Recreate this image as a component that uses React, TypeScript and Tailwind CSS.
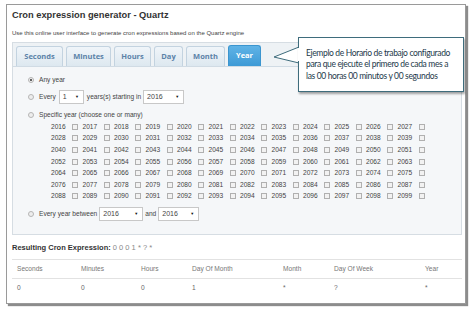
import React from "react";

const years: number[] = Array.from({ length: 84 }, (_, i) => 2016 + i);
const rows: number[][] = Array.from({ length: 7 }, (_, r) => years.slice(r * 12, r * 12 + 12));

function Radio({ checked }: { checked?: boolean }) {
  return (
    <span className="w-[6px] h-[6px] rounded-full border border-[#b5b5b5] bg-[#eeeeee] flex items-center justify-center shrink-0">
      {checked && <span className="w-[2px] h-[2px] rounded-full bg-[#333]" />}
    </span>
  );
}

function Select({ value, w }: { value: string; w: string }) {
  return (
    <span className={`${w} h-[14px] border border-[#c8c8c8] bg-white flex items-center justify-between pl-[3px] pr-[4px] text-[7px] text-[#444]`}>
      <span>{value}</span>
      <span className="text-[4px] text-[#111]">▼</span>
    </span>
  );
}

const tabs = [
  { name: "Seconds", w: "w-[47px]" },
  { name: "Minutes", w: "w-[45px]" },
  { name: "Hours", w: "w-[37px]" },
  { name: "Day", w: "w-[29px]" },
  { name: "Month", w: "w-[39px]" },
];

export default function App() {
  return (
    <div className="relative w-[474px] h-[310px] bg-white overflow-hidden" style={{ fontFamily: '"Liberation Sans", Arial, sans-serif' }}>
      <div className="ml-[6px] mt-[4px] w-[460px] h-[300px] border border-[#9a9a9a] bg-white shadow-[2px_2px_1px_rgba(0,0,0,0.45)] pl-[5px] pt-[4px]">
        <div className="h-[12px] leading-[12px] text-[9.3px] font-bold text-[#333]">Cron expression generator - Quartz</div>
        <div className="mt-[8px] h-[8px] leading-[8px] text-[6px] text-[#444]">
          Use this online user interface to generate cron expressions based on the Quartz engine
        </div>
        <div className="mt-[5px] w-[450px] border border-[#d6dde3] bg-[#f5f7f9]">
          <div className="h-[24px] bg-[#eef2f5] flex items-end gap-[3px] pl-[3px] border-b border-[#d0dbe4]" style={{ fontFamily: '"Open Sans", sans-serif' }}>
            {tabs.map((t) => (
              <div
                key={t.name}
                className={`${t.w} h-[20px] rounded-t-[3px] border border-b-0 border-[#c3d3e0] bg-gradient-to-b from-[#f0f5f9] to-[#dde8f0] flex items-center justify-center text-[7.5px] font-bold text-[#5b82a8]`}
              >
                {t.name}
              </div>
            ))}
            <div className="w-[33px] h-[21px] rounded-t-[3px] border border-b-0 border-[#3b95cf] bg-gradient-to-b from-[#5fb3e6] to-[#3d9ad6] flex items-center justify-center text-[7.5px] font-bold text-white">
              Year
            </div>
          </div>
          <div className="pt-[8px] pb-[13px] pl-[15px] text-[6.6px] text-[#444]">
            <div className="h-[10px] flex items-center gap-[5px]">
              <Radio checked />
              <span>Any year</span>
            </div>
            <div className="mt-[5px] h-[14px] flex items-center">
              <Radio />
              <span className="ml-[5px]">Every</span>
              <span className="ml-[3px]"><Select value="1" w="w-[25px]" /></span>
              <span className="ml-[3px]">years(s) starting in</span>
              <span className="ml-[2px]"><Select value="2016" w="w-[41px]" /></span>
            </div>
            <div className="mt-[6px] h-[10px] flex items-center gap-[5px]">
              <Radio />
              <span>Specific year (choose one or many)</span>
            </div>
            <div className="mt-[1px] ml-[23px]">
              {rows.map((row, ri) => (
                <div key={ri} className="h-[11.6px] flex items-center">
                  {row.map((y) => (
                    <div key={y} className="w-[31.5px] flex items-center shrink-0">
                      <span className="w-[14px]">{y}</span>
                      <span className="ml-[7px] w-[6px] h-[6px] border border-[#b0b0b0] bg-[#f2f2f2]" />
                    </div>
                  ))}
                </div>
              ))}
            </div>
            <div className="mt-[5px] h-[14px] flex items-center">
              <Radio />
              <span className="ml-[5px]">Every year between</span>
              <span className="ml-[2px]"><Select value="2016" w="w-[44px]" /></span>
              <span className="ml-[2px]">and</span>
              <span className="ml-[2px]"><Select value="2016" w="w-[41px]" /></span>
            </div>
          </div>
        </div>
        <div className="mt-[8px] h-[10px] leading-[10px] text-[7.5px]">
          <span className="font-bold text-[#333]">Resulting Cron Expression: </span>
          <span className="text-[#888]">0 0 0 1 * ? *</span>
        </div>
        <div className="mt-[6px] w-[450px] text-[6.6px]">
          <div className="h-[20px] border-t border-b border-[#e2e2e2] flex items-center text-[#777]">
            <span className="w-[69px] pl-[5px]">Seconds</span>
            <span className="w-[60px]">Minutes</span>
            <span className="w-[51px]">Hours</span>
            <span className="w-[91px]">Day Of Month</span>
            <span className="w-[51px]">Month</span>
            <span className="w-[91px]">Day Of Week</span>
            <span>Year</span>
          </div>
          <div className="h-[18px] flex items-center text-[#666]">
            <span className="w-[69px] pl-[5px]">0</span>
            <span className="w-[60px]">0</span>
            <span className="w-[51px]">0</span>
            <span className="w-[91px]">1</span>
            <span className="w-[51px]">*</span>
            <span className="w-[91px]">?</span>
            <span>*</span>
          </div>
        </div>
      </div>

      <svg className="absolute left-[272px] top-[44px]" width="28" height="24" viewBox="0 0 28 24">
        <polygon points="27,3 2,13 27,19" fill="white" stroke="#3e6c7c" strokeWidth="1" />
      </svg>
      <div
        className="absolute left-[298px] top-[37px] w-[166px] h-[55px] border border-[#3e6c7c] bg-white shadow-[1px_2px_2px_rgba(0,0,0,0.35)] pl-[7px] pt-[10px] text-[8.5px] leading-[11.3px] tracking-[-0.35px] whitespace-nowrap text-[#23384a]"
        style={{ fontFamily: "Lato, sans-serif" }}
      >
        <div>Ejemplo de Horario de trabajo configurado</div>
        <div>para que ejecute el primero de cada mes a</div>
        <div>las 00 horas 00 minutos y 00 segundos</div>
      </div>
      <div className="absolute left-[298px] top-[48px] w-[2px] h-[13px] bg-white" />
    </div>
  );
}
